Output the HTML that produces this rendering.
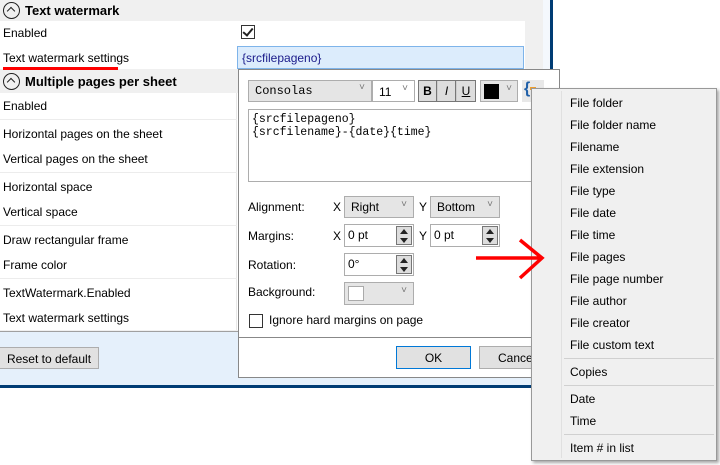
<!DOCTYPE html>
<html><head><style>
*{box-sizing:border-box;margin:0;padding:0}
body{width:720px;height:465px;position:relative;background:#fff;font-family:"Liberation Sans",sans-serif;font-size:12px;color:#000;overflow:hidden}
.abs{position:absolute}
.hdr{position:absolute;left:0;width:543px;height:22px;background:#f0f0f0;font-weight:bold;font-size:13px}
.hdr .c{position:absolute;left:3px;top:2px;width:17px;height:17px;border:1.5px solid #222;border-radius:50%}
.hdr .c:after{content:"";position:absolute;left:4px;top:5px;width:5px;height:5px;border-left:1.6px solid #222;border-top:1.6px solid #222;transform:rotate(45deg)}
.hdr span{position:absolute;left:25px;top:3px}
.row{position:absolute;left:0;width:525px;background:#fff}
.lbl{position:absolute;left:3px;font-size:12px}
.line{position:absolute;left:0;width:237px;height:1px;background:#ececec}
.btn{position:absolute;background:#e1e1e1;border:1px solid #adadad;text-align:center;font-size:12px}
.dd{position:absolute;background:#e5e5e5;border:1px solid #adadad;font-size:12px;padding:3px 0 0 6px}
.dd:after{content:"˅";position:absolute;right:6px;top:2px;color:#777;font-size:10px}
.tb{position:absolute;background:#fff;border:1px solid #adadad;font-size:12px;padding:3px 0 0 3px}
.spin{position:absolute;right:1px;top:1px;width:16px;height:19px;border:1px solid #777;background:#ddd}
.spin:before{content:"";position:absolute;left:3px;top:2px;border:4px solid transparent;border-bottom:5px solid #222;border-top:0}
.spin:after{content:"";position:absolute;left:3px;top:11px;border:4px solid transparent;border-top:5px solid #222;border-bottom:0}
.mi{position:absolute;left:38px;font-size:12px}
.sep{position:absolute;left:32px;width:150px;height:1px;background:#d0d0d0}
</style></head><body>
<div class="abs" style="left:0;top:0;width:543px;height:332px;background:#f0f0f0"></div>
<div class="abs" style="left:543px;top:0;width:7px;height:388px;background:#f4f8fd"></div>
<div class="abs" style="left:550px;top:0;width:3px;height:70px;background:#003c74"></div>
<div class="abs" style="left:0;top:331px;width:550px;height:1px;background:#a0a0a0"></div>
<div class="abs" style="left:0;top:332px;width:550px;height:53px;background:#e5f0fb"></div>
<div class="abs" style="left:0;top:385px;width:553px;height:3px;background:#003c74"></div>

<div class="hdr" style="top:0"><div class="c"></div><span>Text watermark</span></div>
<div class="row" style="top:21px;height:48px"></div>
<div class="lbl" style="top:26px">Enabled</div>
<div class="abs" style="left:241px;top:25px;width:14px;height:14px;border:1px solid #333;background:#fff"></div>
<div class="abs" style="left:245px;top:26px;width:6px;height:10px;border-right:2px solid #222;border-bottom:2px solid #222;transform:rotate(40deg)"></div>
<div class="lbl" style="top:51px">Text watermark settings</div>
<div class="abs" style="left:3px;top:67px;width:115px;height:3px;background:#f00"></div>
<div class="abs" style="left:237px;top:46px;width:287px;height:23px;background:#dcecfc;border:1px solid #7eb4ea;color:#1a1a8a;padding:4px 0 0 4px">{srcfilepageno}</div>

<div class="hdr" style="top:71px"><div class="c"></div><span>Multiple pages per sheet</span></div>
<div class="row" style="top:93px;height:237px"></div>
<div class="abs" style="left:236px;top:93px;width:1px;height:237px;background:#e8e8e8"></div>
<div class="lbl" style="top:99px">Enabled</div>
<div class="line" style="top:119px"></div>
<div class="lbl" style="top:127px">Horizontal pages on the sheet</div>
<div class="lbl" style="top:152px">Vertical pages on the sheet</div>
<div class="line" style="top:172px"></div>
<div class="lbl" style="top:180px">Horizontal space</div>
<div class="lbl" style="top:205px">Vertical space</div>
<div class="line" style="top:225px"></div>
<div class="lbl" style="top:233px">Draw rectangular frame</div>
<div class="lbl" style="top:258px">Frame color</div>
<div class="line" style="top:278px"></div>
<div class="lbl" style="top:286px">TextWatermark.Enabled</div>
<div class="lbl" style="top:311px">Text watermark settings</div>
<div class="btn" style="left:-1px;top:347px;width:100px;height:22px;padding-top:4px">Reset to default</div>

<div class="abs" style="left:238px;top:69px;width:322px;height:309px;background:#fff;border:1px solid #888"></div>
<div class="dd" style="left:248px;top:80px;width:124px;height:22px;font-family:'Liberation Mono',monospace;font-size:12px">Consolas</div>
<div class="abs" style="left:372px;top:80px;width:43px;height:22px;background:#fff;border:1px solid #adadad;padding:4px 0 0 6px">11<span style="position:absolute;right:6px;top:2px;color:#777;font-size:10px">˅</span></div>
<div class="abs" style="left:418px;top:80px;width:58px;height:22px;border:1px solid #777;background:#ccc"></div>
<div class="abs" style="left:419px;top:81px;width:18px;height:20px;background:#ddd;border-right:1px solid #777;text-align:center;font-weight:bold;padding-top:3px">B</div>
<div class="abs" style="left:438px;top:81px;width:18px;height:20px;background:#ddd;border-right:1px solid #777;text-align:center;font-style:italic;padding-top:3px">I</div>
<div class="abs" style="left:457px;top:81px;width:18px;height:20px;background:#ddd;text-align:center;text-decoration:underline;padding-top:3px">U</div>
<div class="abs" style="left:480px;top:80px;width:38px;height:22px;background:#e5e5e5;border:1px solid #adadad"><div class="abs" style="left:3px;top:3px;width:15px;height:15px;background:#000"></div><span style="position:absolute;right:5px;top:2px;color:#777;font-size:10px">˅</span></div>
<div class="abs" style="left:522px;top:80px;width:22px;height:22px;background:#e8e8e8;color:#1f5fa8;font-size:16px;font-weight:bold;padding:0 0 0 2px">{<span style="display:inline-block;width:6px;height:3px;background:#f0a030;vertical-align:middle"></span></div>
<div class="abs" style="left:248px;top:109px;width:290px;height:73px;border:1px solid #adadad;font-family:'Liberation Mono',monospace;font-size:11.5px;line-height:13px;padding:3px 0 0 3px">{srcfilepageno}<br>{srcfilename}-{date}{time}</div>
<div class="lbl" style="left:248px;top:200px">Alignment:</div>
<div class="lbl" style="left:333px;top:200px">X</div>
<div class="dd" style="left:344px;top:196px;width:70px;height:22px">Right</div>
<div class="lbl" style="left:419px;top:200px">Y</div>
<div class="dd" style="left:430px;top:196px;width:70px;height:22px">Bottom</div>
<div class="lbl" style="left:248px;top:229px">Margins:</div>
<div class="lbl" style="left:333px;top:229px">X</div>
<div class="tb" style="left:344px;top:224px;width:70px;height:23px">0 pt<div class="spin"></div></div>
<div class="lbl" style="left:419px;top:229px">Y</div>
<div class="tb" style="left:430px;top:224px;width:70px;height:23px">0 pt<div class="spin"></div></div>
<div class="lbl" style="left:248px;top:258px">Rotation:</div>
<div class="tb" style="left:344px;top:253px;width:70px;height:23px">0°<div class="spin"></div></div>
<div class="lbl" style="left:248px;top:285px">Background:</div>
<div class="dd" style="left:344px;top:282px;width:70px;height:23px;padding:0"><div class="abs" style="left:3px;top:3px;width:16px;height:15px;background:#fff;border:1px solid #aaa"></div></div>
<div class="abs" style="left:249px;top:314px;width:14px;height:14px;border:1px solid #333;background:#fff"></div>
<div class="lbl" style="left:269px;top:313px">Ignore hard margins on page</div>
<div class="abs" style="left:239px;top:337px;width:320px;height:1px;background:#888"></div>
<div class="btn" style="left:396px;top:346px;width:75px;height:23px;border-color:#0078d7;padding-top:4px">OK</div>
<div class="btn" style="left:479px;top:346px;width:80px;height:23px;padding:4px 0 0 18px;text-align:left;overflow:hidden">Cancel</div>

<div class="abs" style="left:531px;top:88px;width:186px;height:373px;background:#f0f0f0;border:1px solid #999;box-shadow:2px 2px 3px rgba(0,0,0,.35)">
<div class="abs" style="left:29px;top:2px;width:1px;height:367px;background:#e0e0e0"></div>
<div class="mi" style="top:7px">File folder</div>
<div class="mi" style="top:29px">File folder name</div>
<div class="mi" style="top:51px">Filename</div>
<div class="mi" style="top:73px">File extension</div>
<div class="mi" style="top:95px">File type</div>
<div class="mi" style="top:117px">File date</div>
<div class="mi" style="top:139px">File time</div>
<div class="mi" style="top:161px">File pages</div>
<div class="mi" style="top:183px">File page number</div>
<div class="mi" style="top:205px">File author</div>
<div class="mi" style="top:227px">File creator</div>
<div class="mi" style="top:249px">File custom text</div>
<div class="sep" style="top:269px"></div>
<div class="mi" style="top:276px">Copies</div>
<div class="sep" style="top:296px"></div>
<div class="mi" style="top:303px">Date</div>
<div class="mi" style="top:325px">Time</div>
<div class="sep" style="top:345px"></div>
<div class="mi" style="top:352px">Item # in list</div>
</div>

<svg class="abs" style="left:470px;top:232px" width="80" height="52"><path d="M6 26 H70 M50 8 L72 26 L50 46" fill="none" stroke="#f00" stroke-width="3.5"/></svg>
</body></html>
